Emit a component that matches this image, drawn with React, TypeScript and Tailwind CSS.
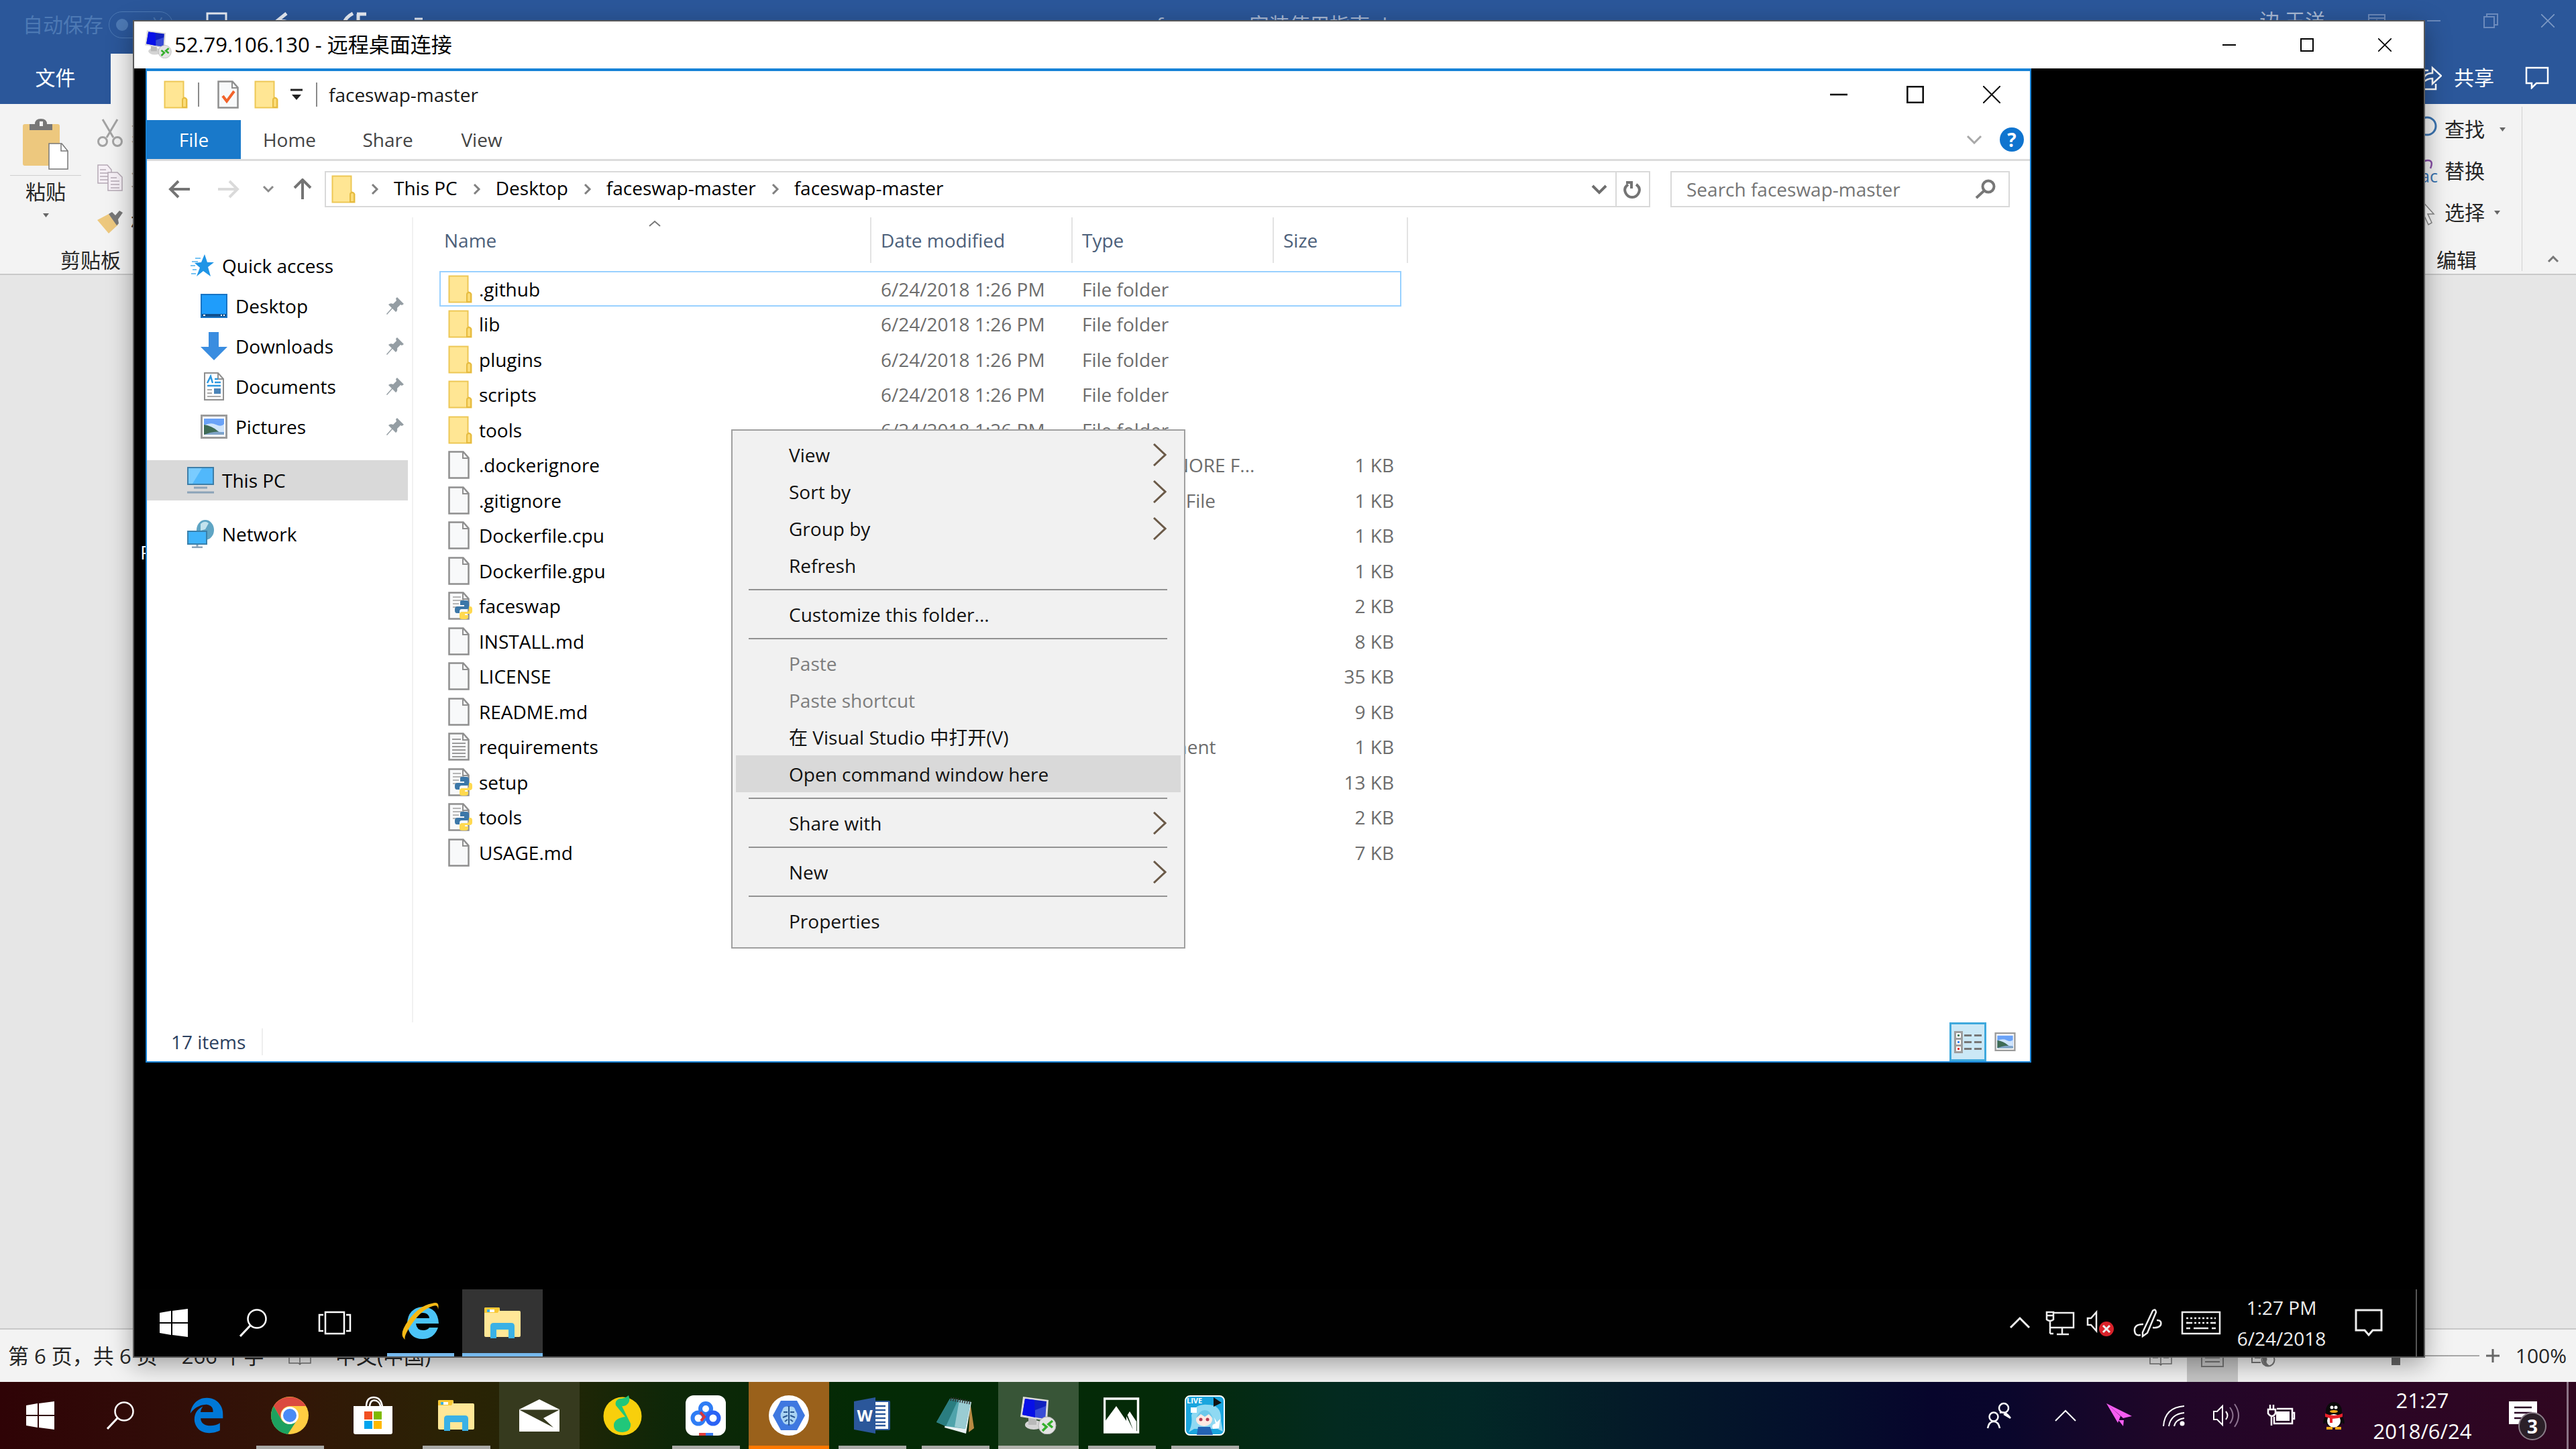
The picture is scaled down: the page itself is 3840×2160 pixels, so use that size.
import React from "react";
import { FaEdgeLegacy } from "react-icons/fa6";

type FileKind = "folder" | "blank" | "text" | "python";

interface FileRow {
  name: string;
  type: string;
  size: string;
  kind: FileKind;
}

const FILES: FileRow[] = [
  { name: ".github", type: "File folder", size: "", kind: "folder" },
  { name: "lib", type: "File folder", size: "", kind: "folder" },
  { name: "plugins", type: "File folder", size: "", kind: "folder" },
  { name: "scripts", type: "File folder", size: "", kind: "folder" },
  { name: "tools", type: "File folder", size: "", kind: "folder" },
  { name: ".dockerignore", type: "DOCKERIGNORE F...", size: "1 KB", kind: "blank" },
  { name: ".gitignore", type: "GITIGNORE File", size: "1 KB", kind: "blank" },
  { name: "Dockerfile.cpu", type: "CPU File", size: "1 KB", kind: "blank" },
  { name: "Dockerfile.gpu", type: "GPU File", size: "1 KB", kind: "blank" },
  { name: "faceswap", type: "PY File", size: "2 KB", kind: "python" },
  { name: "INSTALL.md", type: "MD File", size: "8 KB", kind: "blank" },
  { name: "LICENSE", type: "File", size: "35 KB", kind: "blank" },
  { name: "README.md", type: "MD File", size: "9 KB", kind: "blank" },
  { name: "requirements", type: "Text Document", size: "1 KB", kind: "text" },
  { name: "setup", type: "PY File", size: "13 KB", kind: "python" },
  { name: "tools", type: "PY File", size: "2 KB", kind: "python" },
  { name: "USAGE.md", type: "MD File", size: "7 KB", kind: "blank" },
];

interface MenuEntry {
  label?: string;
  submenu?: boolean;
  disabled?: boolean;
  active?: boolean;
}

// An entry without a label is a separator
const MENU: MenuEntry[] = [
  { label: "View", submenu: true },
  { label: "Sort by", submenu: true },
  { label: "Group by", submenu: true },
  { label: "Refresh" },
  {},
  { label: "Customize this folder..." },
  {},
  { label: "Paste", disabled: true },
  { label: "Paste shortcut", disabled: true },
  { label: "在 Visual Studio 中打开(V)" },
  { label: "Open command window here", active: true },
  {},
  { label: "Share with", submenu: true },
  {},
  { label: "New", submenu: true },
  {},
  { label: "Properties" },
];

const CRUMBS = ["This PC", "Desktop", "faceswap-master", "faceswap-master"];

/* ---------- Icons ---------- */

const Folder = () => (
  <svg width="36" height="42" viewBox="0 0 36 42" className="shrink-0">
    <path d="M1.5 1.5h28v23l5 4v12h-33z" fill="#ffe694" stroke="#edc755" strokeWidth="2" />
    <path d="M28 40V29q0-3 3-3t3 3v11z" fill="#fbdc78" stroke="#e6bb3f" strokeWidth="2" />
  </svg>
);

const Sheet = ({ children }: { children?: React.ReactNode }) => (
  <svg width="36" height="42" viewBox="0 0 36 42" className="shrink-0">
    <path d="M1.5 1.5h21l8 9v30h-29z" fill="#f8f9fa" stroke="#8f8f8f" strokeWidth="2.5" />
    <path d="M22 2v9h8" fill="none" stroke="#8f8f8f" strokeWidth="2" />
    {children}
  </svg>
);

const FileIcon = ({ kind }: { kind: FileKind }) => {
  switch (kind) {
    case "folder":
      return <Folder />;
    case "text":
      return (
        <Sheet>
          <path d="M6 10h13M6 16h20M6 21h20M6 26h20M6 31h20M6 36h20" stroke="#9a9a9a" strokeWidth="2" />
        </Sheet>
      );
    case "python":
      return (
        <Sheet>
          <path d="M7 8h12M7 13h17M7 18h9M7 23h7" stroke="#b5b5b5" strokeWidth="2" />
          <path d="M18 15q0-2 3-2h6q4 0 4 4v6q0 3-3 3h-8q-3 0-3 4v2h-4q-3 0-3-4v-2q0-4 4-4h10v-2h-6z" fill="#3b77a8" />
          <path d="M31 22h2q3 0 3 4v3q0 4-4 4h-7v2h5v3q0 3-4 3h-5q-4 0-4-3v-4q0-4 4-4h7q3 0 3-4z" fill="#ffd94f" />
        </Sheet>
      );
    default:
      return <Sheet />;
  }
};

const Picture = ({ w = 40, h = 36 }: { w?: number; h?: number }) => (
  <svg width={w} height={h} viewBox="0 0 40 36" className="shrink-0">
    <rect x="1.5" y="1.5" width="37" height="33" fill="#fff" stroke="#9b9b9b" strokeWidth="3" />
    <path d="M5 6h30v24H5z" fill="#6aa2f7" />
    <path d="M5 16q10-5 18-1t12-1v12H5z" fill="#cfe4fb" />
    <path d="M5 15q12 2 20 9t10 3v3H5z" fill="#3f6b55" />
    <path d="M14 27q12-3 21 0v3H5z" fill="#7fa3c7" />
  </svg>
);

const Windows = () => (
  <svg width="42" height="42" viewBox="0 0 42 42">
    <path d="M0 6l17-3v17H0zM19 3l23-3v20H19zM0 22h17v17L0 36zM19 22h23v20l-23-3z" fill="#fff" />
  </svg>
);

const Search = () => (
  <svg width="42" height="42" viewBox="0 0 42 42" fill="none" stroke="#fff" strokeWidth="2.5">
    <circle cx="26" cy="15" r="13.5" />
    <path d="M16 25L1 41" strokeWidth="3" />
  </svg>
);

const Explorer = () => (
  <svg width="54" height="46" viewBox="0 0 54 46">
    <path d="M0 2q0-2 2-2h19q2 0 2 2v3h29q2 0 2 2v35q0 2-2 2H2q-2 0-2-2z" fill="#ffe797" />
    <path d="M0 2q0-2 2-2h19q2 0 2 2l-3 6H0z" fill="#f9c834" />
    <path d="M4 3h11v4H4z" fill="#fff" />
    <path d="M4 3h4v4H4z" fill="#3ab1e6" />
    <path d="M9 46V28q0-5 5-5h26q5 0 5 5v18h-9V33H18v13z" fill="#3ab1e6" />
  </svg>
);

const Remote = ({ w = 54, h = 56 }: { w?: number; h?: number }) => (
  <svg width={w} height={h} viewBox="0 0 54 56" className="shrink-0">
    <ellipse cx="20" cy="42" rx="13" ry="7" fill="#d4d4d4" />
    <path d="M12 30h12v12H12z" fill="#b9b9b9" />
    <path d="M4 0l38 5-2 31L0 30z" fill="#dcdcdc" />
    <path d="M7 3l32 4-2 26L3 27z" fill="#1020c0" />
    <path d="M7 3l14 2 1 26L3 27z" fill="#0710e8" />
    <path d="M22 20l16-6-1 19-15-2z" fill="#4a5fe0" opacity=".7" />
    <circle cx="40" cy="43" r="13" fill="#e4e4e4" stroke="#b0b0b0" />
    <path d="M33 40l6 5-6 6M48 36l-6 5 6 5" fill="none" stroke="#35b02c" strokeWidth="3.5" />
  </svg>
);

const Minimize = ({ s = 20 }: { s?: number }) => (
  <svg width={s} height={s} viewBox="0 0 20 20"><path d="M0 10h20" stroke="currentColor" strokeWidth="2" /></svg>
);
const Maximize = ({ s = 20 }: { s?: number }) => (
  <svg width={s} height={s} viewBox="0 0 20 20"><path d="M1 1h18v18H1z" fill="none" stroke="currentColor" strokeWidth="2" /></svg>
);
const Close = ({ s = 20 }: { s?: number }) => (
  <svg width={s} height={s} viewBox="0 0 20 20"><path d="M0 0l20 20M20 0L0 20" stroke="currentColor" strokeWidth="1.6" /></svg>
);

const Chevron = ({ d, w, h, color = "currentColor", stroke = 3 }: { d: string; w: number; h: number; color?: string; stroke?: number }) => (
  <svg width={w} height={h} viewBox={`0 0 ${w} ${h}`} fill="none" stroke={color} strokeWidth={stroke} className="shrink-0">
    <path d={d} />
  </svg>
);

const Caret = () => (
  <svg width="9" height="6" viewBox="0 0 9 6"><path d="M0 0h9L4.5 6z" fill="#666" /></svg>
);

const Pin = () => (
  <svg width="28" height="28" viewBox="0 0 28 28">
    <path d="M17 1l10 10-3 2-2-1-5 5q1 4-2 6l-5-5-8 9-1-1 8-9-5-5q3-3 7-1l5-5-1-3z" fill="#949da3" />
  </svg>
);

/* ---------- Word window in the background ---------- */

function WordWindow() {
  return (
    <div className="flex flex-1 flex-col bg-[#e6e6e6] text-[30px] leading-10 text-[#262626]">
      <header className="grid h-20 grid-cols-[1fr_auto_1fr] items-start bg-[#2b579a] text-[#a9bad6]">
        <div className="flex h-[74px] items-center">
          <span id="autosave" className="ml-[34px] text-[#4d79b4]">自动保存</span>
          <button role="switch" aria-checked="false" aria-labelledby="autosave" className="ml-2 flex h-10 w-24 items-center justify-between rounded-full border border-[#4d79b4] px-2.5 text-2xl text-[#4d79b4]">
            <span className="h-[18px] w-[18px] rounded-full bg-[#4d79b4]" />
            关
          </button>
          <svg width="330" height="42" viewBox="0 0 330 42" className="ml-12" fill="none" stroke="#e8edf5" strokeWidth="3">
            <path d="M3 4h28v34H3z" />
            <path d="M121 4l-15 12 15 12M108 16q26-4 24 22" strokeWidth="5" />
            <path d="M220 4q-22 12-8 32M226 5h14M228 5v16q12 8 0 18" strokeWidth="5" />
            <path d="M312 12h12" />
          </svg>
        </div>
        <div className="flex h-[74px] items-center">faceswap 安装使用指南.docx</div>
        <div className="flex h-[62px] items-center justify-end">
          <span className="mr-16">边 王洋</span>
          <button aria-label="Ribbon display" className="mr-[62px] text-[#6b8abc]">
            <svg width="26" height="20" viewBox="0 0 26 20" fill="none" stroke="currentColor" strokeWidth="2"><path d="M1 1h24v18H1zM1 6h24M13 18v-8M9 13l4-4 4 4" /></svg>
          </button>
          <button aria-label="Minimize" className="mr-[64px] text-[#6b8abc]"><Minimize /></button>
          <button aria-label="Restore" className="mr-[64px] text-[#6b8abc]">
            <svg width="22" height="22" viewBox="0 0 22 22" fill="none" stroke="currentColor" strokeWidth="2"><path d="M1 5h15v16H1zM5 5V1h16v16h-5" /></svg>
          </button>
          <button aria-label="Close" className="mr-8 text-[#7e9ac5]"><Close /></button>
        </div>
      </header>

      <div className="flex h-[75px] justify-between bg-[#2b579a] text-white">
        <div className="flex">
          <button className="w-[165px] pb-1">文件</button>
          <span className="w-[140px] bg-[#f3f3f3]" />
        </div>
        <div className="flex items-center gap-[18px] pr-10 pb-1">
          <svg width="40" height="38" viewBox="0 0 40 38" fill="none" stroke="#fff" strokeWidth="2.5"><path d="M12 26q0-14 14-14V4l13 12-13 12v-8q-8 0-14 6zM20 8H3v28h28v-8" /></svg>
          <button className="mr-7">共享</button>
          <button aria-label="Comments">
            <svg width="36" height="34" viewBox="0 0 36 34" fill="none" stroke="#fff" strokeWidth="2.5"><path d="M2 2h32v23H17l-7 7v-7H2z" /></svg>
          </button>
        </div>
      </div>

      <div className="flex h-[255px] justify-between border-b-2 border-[#c9c9c9] bg-[#f3f3f3]">
        <div className="flex flex-col">
          <div className="flex h-[214px] pt-[22px]">
            <button className="ml-[15px] flex w-[106px] flex-col items-center">
              <svg width="68" height="76" viewBox="0 0 68 76">
                <rect y="8" width="55" height="62" rx="3" fill="#edc87e" />
                <path d="M10 8h8q0-8 9-8t9 8h8v9H10z" fill="#777" />
                <path d="M25 4h5v7h-5z" fill="#f3f3f3" />
                <path d="M39 37h19l9 11v27H39z" fill="#fff" stroke="#777" strokeWidth="1.5" />
                <path d="M57 37v11h10" fill="none" stroke="#777" strokeWidth="1.5" />
              </svg>
              <span className="mt-2 h-px w-full bg-[#cfcfcf]" />
              <span className="mt-1">粘贴</span>
              <span className="mt-3"><Caret /></span>
            </button>
            <div className="ml-6 flex flex-col gap-[26px] text-[#a0a0a0]">
              <button className="flex items-center gap-3">
                <svg width="38" height="42" viewBox="0 0 38 42" fill="none" stroke="#a3a3a3" strokeWidth="3"><path d="M8 1l16 27M30 1L14 28" /><circle cx="8" cy="34" r="6.5" /><circle cx="30" cy="34" r="6.5" /></svg>
                剪切
              </button>
              <button className="flex items-center gap-3">
                <svg width="38" height="40" viewBox="0 0 38 40" fill="#f6f0f6" stroke="#b5a9b5" strokeWidth="1.5"><path d="M1 1h14l6 7v20H1zM4 8h9M4 13h12M4 18h12M4 23h12" /><path d="M16 12h14l7 7v20H16zM20 20h9M20 25h13M20 30h13M20 35h13" /></svg>
                复制
              </button>
              <button className="flex items-center gap-3 text-[#333]">
                <svg width="38" height="34" viewBox="0 0 38 34"><path d="M0 14l17-9 14 16-14 13z" fill="#edc87e" /><path d="M17 5l5-3 5 5 6-7 5 3-7 10 1 6-3 3z" fill="#777" /></svg>
                格式刷
              </button>
            </div>
          </div>
          <span className="pl-[90px]">剪贴板</span>
        </div>
        <div className="flex">
          <div className="flex flex-col">
            <div className="flex h-[214px] flex-col gap-[22px] pt-[18px]">
              <button className="flex items-center gap-[10px]">
                <svg width="40" height="40" viewBox="0 0 40 40" fill="none" stroke="#3a73b0" strokeWidth="3"><circle cx="24" cy="15" r="13" /><path d="M14 25L2 38" /></svg>
                查找
                <span className="ml-3"><Caret /></span>
              </button>
              <button className="flex items-center gap-[10px]">
                <svg width="40" height="40" viewBox="0 0 40 40"><path d="M16 16q0-12 9-12t4 12" fill="none" stroke="#8a4fa8" strokeWidth="2.5" /><text x="14" y="37" fontSize="25" fill="#3a73b0" className="font-['Open_Sans',sans-serif]">ac</text></svg>
                替换
              </button>
              <button className="flex items-center gap-[10px]">
                <svg width="40" height="40" viewBox="0 0 40 40" fill="#fff" stroke="#888" strokeWidth="1.5"><path d="M16 2l18 20h-9l6 13-5 3-6-13-6 6z" /></svg>
                选择
                <span className="ml-1"><Caret /></span>
              </button>
            </div>
            <span className="pl-[38px]">编辑</span>
          </div>
          <span className="my-1 ml-6 w-px bg-[#d0d0d0]" />
          <button aria-label="Collapse the ribbon" className="flex w-20 items-end justify-center pr-0 pb-4 pl-3">
            <Chevron d="M2 9l7-7 7 7" w={18} h={11} color="#777" />
          </button>
        </div>
      </div>

      <div className="flex-1" />

      <footer className="flex h-20 items-center justify-between border-t-2 border-[#c8c8c8] bg-[#f3f3f3]">
        <div className="flex items-center gap-9 pl-3 text-[31px]">
          <span>第 6 页，共 6 页</span>
          <span>266 个字</span>
          <svg width="34" height="30" viewBox="0 0 34 30" fill="none" stroke="#777" strokeWidth="1.5"><path d="M1 1h14l2 2 2-2h14v25H19l-2 2-2-2H1zM17 3v25" /></svg>
          <span>中文(中国)</span>
        </div>
        <div className="flex h-full items-center pr-[14px]">
          <button aria-label="Read mode" className="mr-[22px]">
            <svg width="34" height="34" viewBox="0 0 34 34" fill="none" stroke="#777" strokeWidth="1.5"><path d="M1 1h14l2 2 2-2h14v28H19l-2 2-2-2H1zM17 3v28M5 10h8M5 20h8M21 10h8M21 20h8" /></svg>
          </button>
          <button aria-label="Print layout" className="flex h-full w-[76px] items-center justify-center bg-[#c6c6c6]">
            <svg width="34" height="34" viewBox="0 0 34 34" fill="none" stroke="#777" strokeWidth="2"><path d="M1 1h32v32H1zM6 8h22M6 14h22M6 20h22M6 26h22" /></svg>
          </button>
          <button aria-label="Web layout" className="ml-[20px]">
            <svg width="36" height="34" viewBox="0 0 36 34" fill="none" stroke="#777" strokeWidth="2"><path d="M14 27H1V1h24v8M5 10h9M5 20h9" /><circle cx="25" cy="23" r="9.5" fill="#f3f3f3" /><path d="M18 16q6 4 4 8t4 8q-8-2-8-8z" fill="#777" /></svg>
          </button>
          <input type="range" aria-label="Zoom" defaultValue={50} className="ml-14 h-8 w-[248px] appearance-none bg-[linear-gradient(#a6a6a6,#a6a6a6)] bg-[length:100%_2px] bg-center bg-no-repeat [&::-webkit-slider-thumb]:h-7 [&::-webkit-slider-thumb]:w-[13px] [&::-webkit-slider-thumb]:appearance-none [&::-webkit-slider-thumb]:bg-[#666]" />
          <button aria-label="Zoom in" className="mr-6 ml-2.5">
            <svg width="20" height="20" viewBox="0 0 20 20"><path d="M0 10h20M10 0v20" stroke="#666" strokeWidth="3" /></svg>
          </button>
          <span>100%</span>
        </div>
      </footer>
    </div>
  );
}

/* ---------- File explorer on the remote desktop ---------- */

const QUICK = [
  {
    label: "Desktop",
    icon: (
      <svg width="40" height="36" viewBox="0 0 40 36"><path d="M1 1h38v34H1z" fill="#1f9dfb" stroke="#1874c4" strokeWidth="2" /><path d="M2 30h36v4H2z" fill="#104f8c" /><path d="M4 31h3v2H4zM30 31h2v2h-2zM34 31h2v2h-2z" fill="#fff" /></svg>
    ),
  },
  {
    label: "Downloads",
    icon: <svg width="40" height="42" viewBox="0 0 40 42"><path d="M12 0h15v22h13L20 42 0 22h12z" fill="#3a8de0" /></svg>,
  },
  {
    label: "Documents",
    icon: (
      <svg width="40" height="42" viewBox="0 0 40 42"><path d="M6 1h20l8 9v31H6z" fill="#fff" stroke="#8f8f8f" strokeWidth="2" /><path d="M26 1v9h8" fill="none" stroke="#8f8f8f" strokeWidth="2" /><path d="M10 16l5-10 3 10M21 10h5M21 15h9M10 20h20" fill="none" stroke="#2c98e0" strokeWidth="2.5" /><path d="M10 26h7M10 31h7M10 36h20" stroke="#aaa" strokeWidth="2" /><path d="M20 24h10v8H20z" fill="#4a84b8" /></svg>
    ),
  },
  { label: "Pictures", icon: <Picture /> },
];

function NavigationPane() {
  return (
    <nav className="w-[397px] shrink-0 border-r-2 border-[#f1f1f1] pt-[42px] text-black">
      <a href="#quick" className="flex h-[60px] items-center gap-3 pl-[64px]">
        <svg width="36" height="34" viewBox="0 0 36 34">
          <path d="M22 0l4 12h10l-9 7 4 14-11-8-10 8 5-13-8-7 10-1z" fill="#1f95e6" />
          <path d="M8 6h8M3 11h9M1 17h7M4 23h6M2 29h7" stroke="#76c3f3" strokeWidth="2" />
        </svg>
        Quick access
      </a>
      {QUICK.map((item) => (
        <a key={item.label} href={`#${item.label}`} className="flex h-[60px] items-center gap-3 pr-[11px] pl-[80px]">
          {item.icon}
          <span className="flex-1">{item.label}</span>
          <Pin />
        </a>
      ))}
      <a href="#pc" className="mt-5 mr-1.5 flex h-[60px] items-center gap-3 bg-[#d9d9d9] pl-[60px]">
        <svg width="40" height="40" viewBox="0 0 40 40"><path d="M1 1h38v25H1z" fill="#51b8fb" stroke="#3d7ea8" strokeWidth="2" /><path d="M2 2h20L8 25H2z" fill="#7accff" /><path d="M10 31h20M0 38h40" stroke="#8ba3b8" strokeWidth="3" /></svg>
        This PC
      </a>
      <a href="#network" className="mt-5 flex h-[60px] items-center gap-3 pl-[60px]">
        <svg width="40" height="42" viewBox="0 0 40 42"><ellipse cx="27" cy="15" rx="13" ry="15" fill="#5fa5c4" /><path d="M20 6q6-6 12-1l-5 9-7 2z" fill="#c3e3ee" /><path d="M1 17h28v19H1z" fill="#40b4fa" stroke="#3a80ab" strokeWidth="2" /><path d="M15 37v3M7 41h16" stroke="#8ba3b8" strokeWidth="3" /></svg>
        Network
      </a>
    </nav>
  );
}

function FileTable() {
  const th = "relative h-[68px] border-r-2 border-[#e3e3e3] p-0 text-left font-normal text-[#4c607a]";
  return (
    <table className="ml-[39px] w-[1444px] table-fixed border-separate border-spacing-0 self-start">
      <colgroup>
        <col className="w-[644px]" />
        <col className="w-[300px]" />
        <col className="w-[300px]" />
        <col className="w-[190px]" />
        <col className="w-[10px]" />
      </colgroup>
      <thead>
        <tr>
          <th className={th}>
            <span className="pl-[7px]">Name</span>
            <span className="absolute top-1 left-1/2 -translate-x-1/2">
              <Chevron d="M2 9l8-7 8 7" w={20} h={11} color="#777" stroke={2} />
            </span>
          </th>
          <th className={th}><span className="pl-[14px]">Date modified</span></th>
          <th className={th}><span className="pl-[14px]">Type</span></th>
          <th className={th} colSpan={2}><span className="pl-[14px]">Size</span></th>
        </tr>
      </thead>
      <tbody className="text-[#6d6d6d] before:block before:h-[12px]">
        {FILES.map((file, i) => {
          const edge = i === 0 ? "border-y-2 border-[#99d1ff]" : "";
          return (
            <tr key={i} className="odd:h-[53px] even:h-[52px]">
              <td className={`p-0 ${edge} ${i === 0 ? "border-l-2" : ""}`}>
                <div className={`flex items-center gap-[10px] text-black ${i === 0 ? "pl-[11px]" : "pl-[13px]"}`}>
                  <FileIcon kind={file.kind} />
                  {file.name}
                </div>
              </td>
              <td className={`p-0 pl-[14px] whitespace-nowrap ${edge}`}>6/24/2018 1:26 PM</td>
              <td className={`p-0 pl-[14px] whitespace-nowrap ${edge}`}>{file.type}</td>
              <td className={`p-0 pr-[11px] text-right ${edge} ${i === 0 ? "border-r-2" : ""}`}>{file.size}</td>
              <td className="p-0" />
            </tr>
          );
        })}
      </tbody>
    </table>
  );
}

function ExplorerWindow() {
  return (
    <section className="absolute top-0 right-[585px] bottom-[338px] left-[17px] flex flex-col border-2 border-t-4 border-[#1883d7] bg-white text-[#1a1a1a]">
      <div className="flex h-[73px] items-center justify-between pb-1">
        <div className="flex items-center pl-[25px]">
          <Folder />
          <span className="ml-[15px] h-9 w-0.5 bg-[#8a8a8a]" />
          <span className="ml-[27px]">
            <Sheet><path d="M8 23l6 8 11-15" fill="none" stroke="#f2622a" strokeWidth="4" /></Sheet>
          </span>
          <span className="ml-[19px]"><Folder /></span>
          <svg width="18" height="18" viewBox="0 0 18 18" className="ml-[18px]"><path d="M0 2h18" stroke="#222" strokeWidth="3" /><path d="M2 9h14l-7 8z" fill="#222" /></svg>
          <span className="mr-[17px] ml-5 h-9 w-0.5 bg-[#8a8a8a]" />
          faceswap-master
        </div>
        <div className="flex text-[#111]">
          <button aria-label="Minimize" className="flex w-[114px] justify-center"><Minimize s={26} /></button>
          <button aria-label="Maximize" className="flex w-[114px] justify-center"><Maximize s={26} /></button>
          <button aria-label="Close" className="flex w-[114px] justify-center"><Close s={26} /></button>
        </div>
      </div>

      <div className="flex h-[61px] items-stretch justify-between border-b-[3px] border-[#dcdcdc] text-[#444]">
        <div className="flex">
          <button className="w-[140px] bg-[#1979ca] text-white">File</button>
          <button className="w-[145px]">Home</button>
          <button className="w-[148px]">Share</button>
          <button className="w-[132px]">View</button>
        </div>
        <div className="flex items-center gap-[26px] pr-[9px]">
          <button aria-label="Expand the ribbon"><Chevron d="M2 2l10 10L22 2" w={24} h={14} color="#a8a8a8" /></button>
          <button className="flex h-9 w-9 items-center justify-center rounded-full bg-[#0f74cf] font-bold text-white">?</button>
        </div>
      </div>

      <div className="flex h-[84px] items-center pr-[30px] pl-8">
        <button aria-label="Back"><Chevron d="M15 2L3 14l12 12M3 14h29" w={32} h={28} color="#747474" stroke={4} /></button>
        <button aria-label="Forward" className="ml-[42px]"><Chevron d="M17 2l12 12-12 12M29 14H0" w={32} h={28} color="#dadada" stroke={4} /></button>
        <button aria-label="Recent locations" className="ml-[34px]"><Chevron d="M2 2l7 7 7-7" w={18} h={12} color="#8a8a8a" /></button>
        <button aria-label="Up" className="ml-7"><Chevron d="M2 14L14 2l12 12M14 3v28" w={28} h={32} color="#747474" stroke={4} /></button>
        <div className="ml-[19px] flex h-[54px] flex-1 items-center border-2 border-[#d9d9d9] pl-2 text-black">
          <Folder />
          {CRUMBS.map((crumb, i) => (
            <React.Fragment key={i}>
              <span className="mr-[22px] ml-[23px]"><Chevron d="M2 2l7 7-7 7" w={12} h={18} color="#808080" /></span>
              <a href={`#crumb-${i}`} className="pb-1">{crumb}</a>
            </React.Fragment>
          ))}
          <button aria-label="Previous locations" className="mr-3 ml-auto"><Chevron d="M2 2l10 10L22 2" w={24} h={15} color="#6e6e6e" stroke={4} /></button>
          <button aria-label="Refresh" className="flex h-full w-[50px] items-center justify-center border-l-2 border-[#d9d9d9]">
            <Chevron d="M19 7q7 5 4 12-3 7-10 7T3 19Q0 12 7 7M4 4h8v9" w={28} h={28} color="#747474" stroke={4} />
          </button>
        </div>
        <label className="ml-[30px] flex h-[54px] w-[506px] items-center border-2 border-[#d9d9d9] pr-[18px] pl-[22px]">
          <input aria-label="Search" placeholder="Search faceswap-master" className="w-0 flex-1 outline-none placeholder:text-[#757575]" />
          <svg width="32" height="30" viewBox="0 0 32 30" fill="none" stroke="#777" strokeWidth="4"><circle cx="20" cy="11" r="8.5" /><path d="M14 17L2 28" /></svg>
        </label>
      </div>

      <div className="flex flex-1">
        <NavigationPane />
        <FileTable />
      </div>

      <div className="flex h-[58px] items-center justify-between pl-9 text-[#2c4160]">
        <span className="border-r-2 border-[#eee] pr-6">17 items</span>
        <div className="flex h-full items-center pr-5">
          <button aria-label="Details" className="flex h-full w-[55px] items-center justify-center border-[3px] border-[#3fa9dd] bg-[#cbe8f6]">
            <svg width="41" height="33" viewBox="0 0 41 33"><path d="M1.5 1.5h10v30h-10zM1 11.5h11M1 21.5h11" fill="#fff" stroke="#9e9e9e" strokeWidth="3" /><path d="M15 6.5h11M30 6.5h11M15 16.5h11M30 16.5h11M15 26.5h11M30 26.5h11" stroke="#777" strokeWidth="3" /><path d="M5 5h3v3H5z" fill="#3c7a5c" /><path d="M5 15h3v3H5z" fill="#3a83f0" /><path d="M5 25h3v3H5z" fill="#e03030" /></svg>
          </button>
          <button aria-label="Large icons" className="ml-[11px]"><Picture w={34} h={28} /></button>
        </div>
      </div>
    </section>
  );
}

function ContextMenu() {
  return (
    <div role="menu" className="absolute top-[538px] left-[890px] w-[677px] border-2 border-[#a0a0a0] bg-[#f1f1f1] px-[5px] pt-2 pb-3">
      {MENU.map((entry, i) =>
        entry.label ? (
          <button
            key={i}
            role="menuitem"
            disabled={entry.disabled}
            className={`flex h-[55px] w-full items-center justify-between pr-[21px] pl-[79px] ${entry.active ? "bg-[#d9d9d9]" : ""} ${
              entry.disabled ? "text-[#7d7d7d]" : "text-[#111]"
            }`}
          >
            {entry.label}
            {entry.submenu && <Chevron d="M1 1l17 16L1 33" w={20} h={34} color="#6b5a48" stroke={3} />}
          </button>
        ) : (
          <div key={i} className="mr-5 ml-[19px] my-2 h-0.5 bg-[#929292]" />
        )
      )}
    </div>
  );
}

function RemoteTaskbar() {
  return (
    <div className="flex h-[100px] items-stretch justify-between bg-[#010101] text-[#eee]">
      <div className="flex">
        <button aria-label="Start" className="flex w-[118px] items-center justify-center"><Windows /></button>
        <button aria-label="Search" className="flex w-[120px] items-center justify-center"><Search /></button>
        <button aria-label="Task view" className="flex w-[122px] items-center justify-center">
          <svg width="50" height="36" viewBox="0 0 50 36" fill="none" stroke="#fff" strokeWidth="2.5"><path d="M11 2h28v32H11zM8 6H2v24h6M42 6h6v24h-6" /></svg>
        </button>
        <button aria-label="Internet Explorer" className="mr-0.5 ml-[7px] flex w-[120px] flex-col items-center justify-between">
          <svg width="60" height="60" viewBox="0 0 60 60" className="mt-[18px]">
            <path d="M57 33H23q1 10 11 10 6 0 9-4h13q-6 17-23 17Q12 56 10 33 11 10 33 8q23 1 24 25zM23 25h20q-1-8-10-8-8 0-10 8z" fill="#4cc4f7" />
            <path d="M7 57Q-4 50 12 28T47 3q12-4 9 9 0-8-8-5Q32 12 18 32T7 57z" fill="#f5b916" />
          </svg>
          <span className="h-[5px] w-[100px] bg-[#76b9ed]" />
        </button>
        <button aria-label="File Explorer" className="flex w-[120px] flex-col items-center justify-between bg-[#333]">
          <span className="pt-[27px]"><Explorer /></span>
          <span className="h-[5px] w-full bg-[#76b9ed]" />
        </button>
      </div>
      <div className="flex items-center">
        <button aria-label="Show hidden icons" className="flex w-[60px] justify-center"><Chevron d="M2 17L16 3l14 14" w={32} h={20} /></button>
        <svg width="60" height="42" viewBox="0 0 60 42" fill="none" stroke="#eee" strokeWidth="2.5"><path d="M20 6h30v22H16M33 28v9M25 38h18M10 5h10v11q-5 4-10 0zM10 10h10M15 18v19M15 37h5" /></svg>
        <svg width="60" height="42" viewBox="0 0 60 42" fill="none" stroke="#eee" strokeWidth="2.5"><path d="M11 14h5l8-9v28l-8-9h-5z" /><circle cx="39" cy="30" r="11" fill="#d9222a" stroke="none" /><path d="M34 25l10 10M44 25L34 35" strokeWidth="3" /></svg>
        <svg width="80" height="44" viewBox="0 0 80 44" fill="none" stroke="#eee" strokeWidth="2.5"><path d="M33 36L48 4q4-4 5 2L40 37l-7 5zM34 24q-14 0-13 10 1 8 9 6M54 18q8 0 6 7-3 5-12 4" /></svg>
        <svg width="80" height="36" viewBox="0 0 80 36" fill="none" stroke="#eee" strokeWidth="2.5"><path d="M12 2h56v32H12z" /><path d="M18 11h44M18 18h44" strokeDasharray="3 3" /><path d="M18 18h6M56 18h6M18 26h6M29 26h22M56 26h6" /></svg>
        <div className="w-[160px] text-center leading-[46px]">
          <div>1:27 PM</div>
          <div>6/24/2018</div>
        </div>
        <button aria-label="Notifications" className="flex w-[100px] justify-center">
          <svg width="42" height="42" viewBox="0 0 42 42" fill="none" stroke="#eee" strokeWidth="3"><path d="M2 2h38v30H27l-6 7-6-7H2z" /></svg>
        </button>
        <span className="ml-5 h-full w-3 border-l-2 border-[#555]" />
      </div>
    </div>
  );
}

function RemoteDesktop() {
  return (
    <main className="absolute top-[30px] right-[225px] bottom-[136px] left-[198px] flex flex-col border-2 border-[#595959] bg-black shadow-[0_10px_34px_rgba(0,0,0,0.35)]">
      <header className="flex h-[70px] items-center justify-between bg-white text-[31px] text-black">
        <div className="flex items-center gap-1 pb-0.5 pl-4">
          <Remote w={40} h={42} />
          <h1>52.79.106.130 - 远程桌面连接</h1>
        </div>
        <div className="flex">
          <button aria-label="Minimize" className="flex w-[116px] justify-center"><Minimize /></button>
          <button aria-label="Maximize" className="flex w-[116px] justify-center"><Maximize /></button>
          <button aria-label="Close" className="flex w-[116px] justify-center"><Close /></button>
        </div>
      </header>
      <div className="relative flex-1">
        {/* desktop shortcut label that peeks out behind the explorer */}
        <span className="absolute top-[701px] left-[9px] text-white">R</span>
        <ExplorerWindow />
        <ContextMenu />
      </div>
      <RemoteTaskbar />
    </main>
  );
}

/* ---------- Host taskbar ---------- */

const APPS: { name: string; tile: string; bar: string; icon: React.ReactNode }[] = [
  { name: "Edge", tile: "", bar: "", icon: <FaEdgeLegacy size={54} color="#0078d7" /> },
  {
    name: "Chrome",
    tile: "",
    bar: "w-[101px] bg-[#a9a9a6]",
    icon: (
      <svg width="56" height="56" viewBox="0 0 56 56">
        <circle cx="28" cy="28" r="28" fill="#ffcd42" />
        <path d="M4 14A28 28 0 0152 14H28a14 14 0 00-12 21z" fill="#db4a3f" />
        <path d="M4 14A28 28 0 0025 56l13-20a14 14 0 01-22-1z" fill="#1ca15f" />
        <circle cx="28" cy="28" r="13" fill="#fff" />
        <circle cx="28" cy="28" r="10" fill="#4b8bf5" />
      </svg>
    ),
  },
  {
    name: "Store",
    tile: "",
    bar: "",
    icon: (
      <svg width="58" height="58" viewBox="0 0 58 58">
        <path d="M19 16q0-14 11-14t13 14M24 16q1-12 10-9 6 3 6 9" fill="none" stroke="#fff" strokeWidth="2.5" />
        <path d="M0 15h58v39q0 3-3 3H3q-3 0-3-3z" fill="#fff" />
        <path d="M16 23h12v12H16z" fill="#f25022" /><path d="M30 23h12v12H30z" fill="#7fba00" />
        <path d="M16 37h12v12H16z" fill="#00a4ef" /><path d="M30 37h12v12H30z" fill="#ffb900" />
      </svg>
    ),
  },
  { name: "File Explorer", tile: "", bar: "w-[101px] bg-[#a9a9a6]", icon: <Explorer /> },
  {
    name: "Mail",
    tile: "bg-[#363a1e]",
    bar: "",
    icon: (
      <svg width="60" height="48" viewBox="0 0 60 48"><path d="M0 15L30 0l30 15v33H0z" fill="#fff" /><path d="M0 15.5h60L36 28l15 14z" fill="#363a1e" /></svg>
    ),
  },
  {
    name: "QQ Music",
    tile: "",
    bar: "",
    icon: (
      <svg width="58" height="60" viewBox="0 0 58 60">
        <circle cx="29" cy="31" r="28.5" fill="#f8cf0c" />
        <path d="M38 0q4 10-4 15-8 3-7-1l14 28q1 12-12 13-14 0-13-12 2-9 17-11L19 15Q17 8 24 5q9 0 14-5z" fill="#21c77a" />
      </svg>
    ),
  },
  {
    name: "Netdisk",
    tile: "",
    bar: "w-[101px] bg-[#a9a9a6]",
    icon: (
      <svg width="60" height="60" viewBox="0 0 60 60">
        <rect width="60" height="60" rx="12" fill="#fff" />
        <g fill="none" strokeWidth="6"><circle cx="30" cy="20" r="8" stroke="#2f7df5" /><circle cx="19" cy="34" r="8.5" stroke="#2f7df5" /><circle cx="41" cy="34" r="8.5" stroke="#2b63f5" /><path d="M22 25l6 7-5 6" stroke="#d8373d" strokeWidth="4" /></g>
        <path d="M20 56h10v4H20z" fill="#e33e3e" /><path d="M30 56h11v4H30z" fill="#3a7af5" />
      </svg>
    ),
  },
  {
    name: "Brain",
    tile: "bg-[#9a611b]",
    bar: "w-full bg-[#ff7800]",
    icon: (
      <svg width="60" height="60" viewBox="0 0 60 60">
        <circle cx="30" cy="30" r="30" fill="#fff" />
        <path d="M18 8h24l12 22-12 22H18L6 30z" fill="#3f78e0" />
        <path d="M29 17q-7-2-9 6-5 7 0 14 3 8 9 6zM31 17q7-2 9 6 5 7 0 14-3 8-9 6z" fill="#a9d3f2" />
        <path d="M30 16v29M22 25h6M21 33l7-3M38 25h-6M39 33l-7-3M24 39l4-3M36 39l-4-3" stroke="#2a5792" strokeWidth="2" />
      </svg>
    ),
  },
  {
    name: "Word",
    tile: "",
    bar: "w-[101px] bg-[#a9a9a6]",
    icon: (
      <svg width="54" height="54" viewBox="0 0 54 54">
        <path d="M28 5h24q2 0 2 2v40q0 2-2 2H28z" fill="#2b579a" /><path d="M28 7h23v40H28z" fill="#fff" />
        <path d="M31 13h16M31 19h16M31 25h16M31 31h16M31 37h16M31 42h16" stroke="#2b579a" strokeWidth="2.5" />
        <path d="M0 6l32-6v54L0 48z" fill="#2b579a" />
        <text x="16" y="36" fontSize="24" fontWeight="bold" textAnchor="middle" fill="#fff">W</text>
      </svg>
    ),
  },
  {
    name: "Notepad",
    tile: "",
    bar: "w-[101px] bg-[#a9a9a6]",
    icon: (
      <svg width="56" height="54" viewBox="0 0 56 54">
        <path d="M50 6l6 40-8 6z" fill="#b98a43" /><path d="M22 2l30 5-8 47-32-9z" fill="#e9f1f3" />
        <path d="M20 2l31 5-8 40-29-4L0 37z" fill="#4fa3ab" /><path d="M20 2l12 2-18 39L0 37z" fill="#2a7d80" /><path d="M34 4l17 3-8 40-16-3z" fill="#9accd3" />
        <path d="M21 2l31 6" stroke="#333" strokeWidth="6" strokeDasharray="1.5 2" />
      </svg>
    ),
  },
  { name: "Remote Desktop", tile: "bg-[#385537]", bar: "w-full bg-[#b2b2ac]", icon: <Remote /> },
  {
    name: "Photos",
    tile: "",
    bar: "w-[101px] bg-[#a9a9a6]",
    icon: (
      <svg width="54" height="54" viewBox="0 0 54 54"><path d="M1.5 2h50v50h-50z" fill="none" stroke="#fff" strokeWidth="3.5" /><path d="M2 36L19 13l15 22v-6l5-8 10 15v16H2z" fill="#fff" /><path d="M32 24l12 24-8-21z" fill="#062a0c" /></svg>
    ),
  },
  {
    name: "Live",
    tile: "",
    bar: "w-[101px] bg-[#a9a9a6]",
    icon: (
      <svg width="60" height="60" viewBox="0 0 60 60">
        <rect x="1" y="1" width="58" height="58" rx="7" fill="#1aa5de" stroke="#fff" strokeWidth="2" />
        <path d="M10 30Q14 12 34 14q22 0 20 24l3 16-8-4H14l-8 5q6-12 4-25z" fill="#8fd9f2" />
        <ellipse cx="29" cy="36" rx="12" ry="10" fill="#ffe9e2" />
        <path d="M17 34q5-12 13-12t12 12l-6-6-6 4-6-4z" fill="#6cc8ea" />
        <circle cx="24" cy="36" r="2.5" fill="#b33a52" /><circle cx="34" cy="36" r="2.5" fill="#b33a52" />
        <path d="M20 47h18l4 12H18z" fill="#2462b4" /><path d="M42 50q-3-7 4-8l-2-9 4 7 5-5-2 14z" fill="#fff" />
        <path d="M43 3l12 8-12 6z" fill="#111" /><path d="M9 18h9v8H9z" fill="#fff" />
        <text x="3" y="12" fontSize="11" fontWeight="bold" fill="#fff">LIVE</text>
      </svg>
    ),
  },
];

function HostTaskbar() {
  return (
    <footer className="flex h-[100px] items-stretch justify-between bg-[linear-gradient(90deg,#2f0306_0%,#310c08_6%,#331507_11%,#2b2205_17%,#252505_21%,#0e2708_26%,#042a05_33%,#042a08_45%,#032a20_52%,#022826_57%,#041b28_63%,#04102c_70%,#07052c_75%,#0a062c_78%,#200628_84%,#2a0526_91%,#300720_100%)] text-white">
      <div className="flex">
        <button aria-label="Start" className="flex w-[120px] items-center justify-center"><Windows /></button>
        <button aria-label="Search" className="mr-2 flex w-[120px] items-center justify-center"><Search /></button>
        <div className="flex gap-1">
          {APPS.map((app) => (
            <button key={app.name} aria-label={app.name} className={`flex w-[120px] flex-col items-center ${app.tile}`}>
              <span className="flex h-[95px] items-center pt-1">{app.icon}</span>
              <span className={`h-[5px] ${app.bar}`} />
            </button>
          ))}
        </div>
      </div>

      <div className="flex items-center">
        <button aria-label="People" className="flex w-[100px] justify-center">
          <svg width="38" height="40" viewBox="0 0 38 40" fill="none" stroke="#fff" strokeWidth="2.5"><circle cx="26" cy="9" r="7" /><path d="M20 16q8-3 16 8M26 18l10 6" /><circle cx="11" cy="22" r="6.5" /><path d="M2 39q2-10 9-10t9 10" /></svg>
        </button>
        <button aria-label="Show hidden icons" className="flex w-[90px] justify-center pl-2"><Chevron d="M1 17L16 2l15 15" w={32} h={18} stroke={2} /></button>
        <svg width="80" height="40" viewBox="0 0 80 40"><path d="M20 2l17 29 4-10zM20 2l38 19-13 3zM38 27l7 9 1-9z" fill="#f65df2" /></svg>
        <svg width="80" height="36" viewBox="0 0 80 36" fill="none" stroke="#fff" strokeWidth="2"><path d="M25 34Q27 6 56 4M33 34q3-18 23-20M41 34q2-10 15-12" /><circle cx="53" cy="30" r="3.5" fill="#fff" stroke="none" /></svg>
        <svg width="80" height="40" viewBox="0 0 80 40" fill="none" stroke="#fff" strokeWidth="2"><path d="M20 14h5l8-8v28l-8-8h-5zM38 14q5 6 0 12" /><path d="M44 8q9 12 0 24M51 3q12 17 0 34" stroke="#8d7390" /></svg>
        <svg width="80" height="36" viewBox="0 0 80 36" fill="none" stroke="#fff" strokeWidth="2.5"><path d="M34 8h23v22H30V20M57 14h3v9h-3" /><path d="M33 12h20v14H33z" fill="#fff" stroke="none" /><path d="M21 9h11v6q-5 8-11 0zM24 9V2M29 9V2M26 19v14" /></svg>
        <svg width="80" height="42" viewBox="0 0 80 42">
          <ellipse cx="39" cy="15" rx="12" ry="14" fill="#0a0a0a" /><path d="M26 22q-4 8-2 12l4-4zM52 22q4 8 2 12l-4-4z" fill="#0a0a0a" />
          <ellipse cx="39" cy="28" rx="13" ry="11" fill="#0a0a0a" /><ellipse cx="39" cy="29" rx="10" ry="10" fill="#fff" />
          <circle cx="36" cy="9" r="2.5" fill="#fff" /><circle cx="42" cy="9" r="2.5" fill="#fff" /><ellipse cx="39" cy="15" rx="6" ry="2" fill="#f9a81a" />
          <path d="M26 18q13 6 26 0v5q-7 3-15 3v6h-4v-7l-7-2z" fill="#e8202a" /><path d="M28 40h9M41 40h9" stroke="#f9a81a" strokeWidth="4" />
        </svg>
        <div className="w-[182px] text-center text-[31px] leading-[46px]">
          <div>21:27</div>
          <div>2018/6/24</div>
        </div>
        <button aria-label="Notifications" className="relative flex w-[118px] justify-center">
          <svg width="42" height="42" viewBox="0 0 42 42"><path d="M0 0h42v34H27l-7 8-3-8H0z" fill="#fff" /><path d="M8 9h26M8 17h26M8 25h26" stroke="#2a0824" strokeWidth="2.5" /></svg>
          <span className="absolute top-4 right-6 flex h-[42px] w-[42px] items-center justify-center rounded-full border-2 border-[#8a7d88] bg-[#2b2028] text-[28px] font-bold">3</span>
        </button>
        <span className="ml-1.5 h-full w-[14px] border-l-[3px] border-[#8c7586]" />
      </div>
    </footer>
  );
}

export default function App() {
  return (
    <div className="relative flex min-h-screen flex-col overflow-hidden font-['Open_Sans','Noto_Sans_CJK_SC',sans-serif] text-[28px] leading-10">
      <WordWindow />
      <RemoteDesktop />
      <div className="relative">
        <HostTaskbar />
      </div>
    </div>
  );
}
